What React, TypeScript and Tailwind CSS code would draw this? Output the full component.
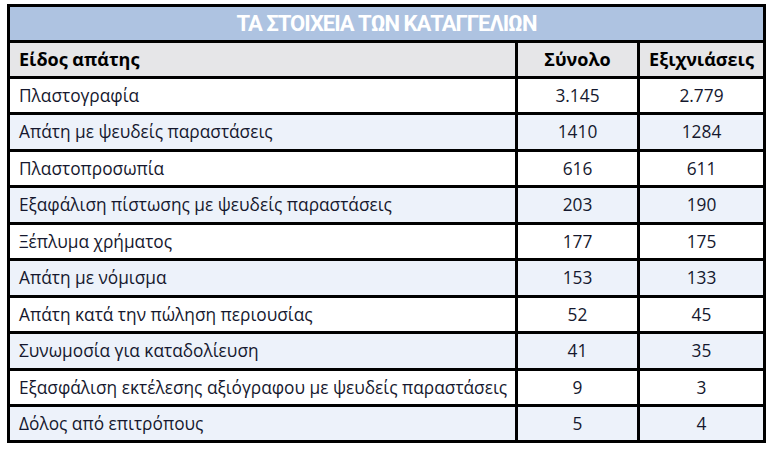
import React from "react";

type Row = { name: string; total: string; found: string };

const rows: Row[] = [
  { name: "Πλαστογραφία", total: "3.145", found: "2.779" },
  { name: "Απάτη με ψευδείς παραστάσεις", total: "1410", found: "1284" },
  { name: "Πλαστοπροσωπία", total: "616", found: "611" },
  { name: "Εξαφάλιση πίστωσης με ψευδείς παραστάσεις", total: "203", found: "190" },
  { name: "Ξέπλυμα χρήματος", total: "177", found: "175" },
  { name: "Απάτη με νόμισμα", total: "153", found: "133" },
  { name: "Απάτη κατά την πώληση περιουσίας", total: "52", found: "45" },
  { name: "Συνωμοσία για καταδολίευση", total: "41", found: "35" },
  { name: "Εξασφάλιση εκτέλεσης αξιόγραφου με ψευδείς παραστάσεις", total: "9", found: "3" },
  { name: "Δόλος από επιτρόπους", total: "5", found: "4" },
];

export default function App() {
  return (
    <div className="w-[775px] h-[454px] bg-white pl-[7px] pt-[4px] font-['Open_Sans','Noto_Sans',sans-serif] text-[#15182e]">
      <div className="w-[759px] border-[3px] border-black bg-black flex flex-col gap-[3px]">
        <div className="h-[33px] bg-[#aec3e1] flex items-center justify-center">
          <span className="text-white font-bold text-[22px] tracking-[-1px] font-['Roboto',sans-serif]">
            ΤΑ ΣΤΟΙΧΕΙΑ ΤΩΝ ΚΑΤΑΓΓΕΛΙΩΝ
          </span>
        </div>
        <div className="h-[33px] grid grid-cols-[505px_119px_123px] gap-[3px] font-bold text-[18px] text-black">
          <div className="bg-[#e6e6e8] flex items-center pl-[9px]">Είδος απάτης</div>
          <div className="bg-[#e6e6e8] flex items-center justify-center">Σύνολο</div>
          <div className="bg-[#e6e6e8] flex items-center justify-center">Εξιχνιάσεις</div>
        </div>
        {rows.map((r, i) => {
          const bg = i % 2 === 0 ? "bg-white" : "bg-[#edf2fa]";
          // 4 of the rows are a pixel taller so the table ends where the scan does
          const h = i % 2 === 1 && i < 8 ? "h-[34px]" : "h-[33px]";
          return (
            <div
              key={r.name}
              className={`${h} grid grid-cols-[505px_119px_123px] gap-[3px] text-[17.3px]`}
            >
              <div className={`${bg} flex items-center pl-[9px] whitespace-nowrap`}>{r.name}</div>
              <div className={`${bg} flex items-center justify-center`}>{r.total}</div>
              <div className={`${bg} flex items-center justify-center`}>{r.found}</div>
            </div>
          );
        })}
      </div>
    </div>
  );
}
